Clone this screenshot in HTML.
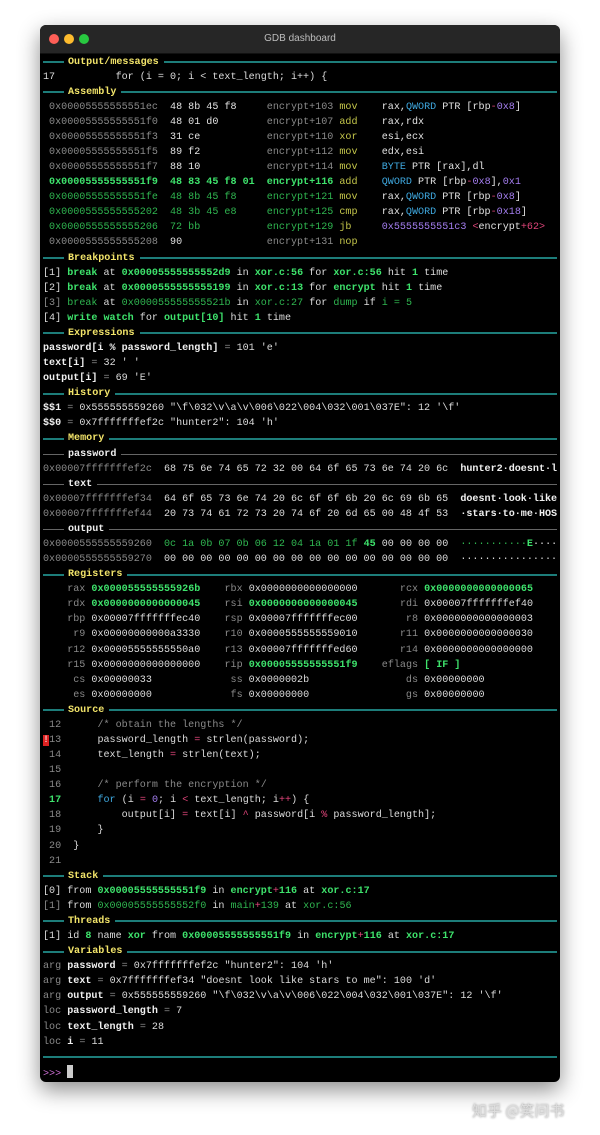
<!DOCTYPE html>
<html><head><meta charset="utf-8"><style>
html,body{margin:0;padding:0;background:#fff;width:600px;height:1135px;overflow:hidden;position:relative}
.win{position:absolute;left:40px;top:25px;width:520px;height:1057px;background:#000;border-radius:6px;box-shadow:0 8px 22px rgba(0,0,0,.45);overflow:hidden}
.tb{position:absolute;left:0;top:0;width:520px;height:28px;background:#262626;border-bottom:1px solid #111}
.dot{position:absolute;top:9px;width:10px;height:10px;border-radius:50%}
.tt{position:absolute;left:0;right:0;top:8px;text-align:center;font:10px "Liberation Sans",sans-serif;color:#bdbdbd}
.t{position:absolute;left:43px;top:54.5px;width:514px;font-family:"Liberation Mono",monospace;font-size:10.08px;line-height:15.09px;color:#dcdcdc}
.t>div{height:15.09px;white-space:pre;overflow:hidden}
.h{display:flex;align-items:center}
.h i{display:block;width:21px;height:2px;background:#1d7d7a;margin-right:4px}
.h span{color:#f2e46a;font-weight:bold}
.h u{display:block;flex:1;height:2px;background:#1d7d7a;margin-left:5px}
.s{display:flex;align-items:center}
.s i{display:block;width:21px;height:1px;background:#666;margin-right:4px}
.s span{color:#eee;font-weight:bold}
.s u{display:block;flex:1;height:1px;background:#666;margin-left:5px}
.g{color:#8a8a8a}.w{color:#e2e2e2}.G{color:#3ee36c;font-weight:bold}.d{color:#2fb650}
.m{color:#c4c64a}.c{color:#3fa9e0}.p{color:#a47ef0}.r{color:#e0457a}.b{color:#f0f0f0;font-weight:bold}
.gb{color:#3ee36c;font-weight:bold}
.bang{background:#d22;color:#fff}
.wm{position:absolute;left:472px;top:1100px;font:15px "Noto Sans CJK SC",sans-serif;color:#ddd;text-shadow:0 0 2px #888}
.cur{display:inline-block;width:6px;height:13px;background:#ccc;vertical-align:-2px}
</style></head><body>
<div class="win">
<div class="tb"><div class="dot" style="left:9px;background:#fe5f57"></div><div class="dot" style="left:24px;background:#febc2e"></div><div class="dot" style="left:39px;background:#28c840"></div><div class="tt">GDB dashboard</div></div>
</div>
<div class="t">
<div class="h"><i></i><span>Output/messages</span><u></u></div>
<div>17          for (i = 0; i &lt; text_length; i++) {</div>
<div class="h"><i></i><span>Assembly</span><u></u></div>
<div class="g"> 0x00005555555551ec  <span class="w">48 8b 45 f8</span>     encrypt+103 <span class="m">mov</span>    <span class="w">rax,<span class="c">QWORD</span> PTR [rbp<span class="r">-</span><span class="p">0x8</span>]</span></div>
<div class="g"> 0x00005555555551f0  <span class="w">48 01 d0</span>        encrypt+107 <span class="m">add</span>    <span class="w">rax,rdx</span></div>
<div class="g"> 0x00005555555551f3  <span class="w">31 ce</span>           encrypt+110 <span class="m">xor</span>    <span class="w">esi,ecx</span></div>
<div class="g"> 0x00005555555551f5  <span class="w">89 f2</span>           encrypt+112 <span class="m">mov</span>    <span class="w">edx,esi</span></div>
<div class="g"> 0x00005555555551f7  <span class="w">88 10</span>           encrypt+114 <span class="m">mov</span>    <span class="c">BYTE</span><span class="w"> PTR [rax],dl</span></div>
<div class="G"> 0x00005555555551f9  48 83 45 f8 01  encrypt+116 <span class="m" style="font-weight:normal">add</span>    <span class="c" style="font-weight:normal">QWORD</span><span class="w" style="font-weight:normal"> PTR [rbp<span class="r">-</span><span class="p">0x8</span>],<span class="p">0x1</span></span></div>
<div class="d"> 0x00005555555551fe  48 8b 45 f8     encrypt+121 <span class="m">mov</span>    <span class="w">rax,<span class="c">QWORD</span> PTR [rbp<span class="r">-</span><span class="p">0x8</span>]</span></div>
<div class="d"> 0x0000555555555202  48 3b 45 e8     encrypt+125 <span class="m">cmp</span>    <span class="w">rax,<span class="c">QWORD</span> PTR [rbp<span class="r">-</span><span class="p">0x18</span>]</span></div>
<div class="d"> 0x0000555555555206  72 bb           encrypt+129 <span class="m">jb</span>     <span class="p">0x5555555551c3 <span class="r">&lt;</span><span class="w">encrypt</span><span class="r">+62&gt;</span></span></div>
<div class="g"> 0x0000555555555208  <span class="w">90</span>              encrypt+131 <span class="m">nop</span></div>
<div class="h"><i></i><span>Breakpoints</span><u></u></div>
<div>[1] <span class="gb">break</span> at <span class="gb">0x00005555555552d9</span> in <span class="gb">xor.c:56</span> for <span class="gb">xor.c:56</span> hit <span class="gb">1</span> time</div>
<div>[2] <span class="gb">break</span> at <span class="gb">0x0000555555555199</span> in <span class="gb">xor.c:13</span> for <span class="gb">encrypt</span> hit <span class="gb">1</span> time</div>
<div><span class="g">[3]</span> <span class="d">break</span> at <span class="d">0x000055555555521b</span> in <span class="d">xor.c:27</span> for <span class="d">dump</span> if <span class="d">i = 5</span></div>
<div>[4] <span class="gb">write watch</span> for <span class="gb">output[10]</span> hit <span class="gb">1</span> time</div>
<div class="h"><i></i><span>Expressions</span><u></u></div>
<div><span class="b">password[i % password_length]</span> <span class="g">=</span> 101 'e'</div>
<div><span class="b">text[i]</span> <span class="g">=</span> 32 ' '</div>
<div><span class="b">output[i]</span> <span class="g">=</span> 69 'E'</div>
<div class="h"><i></i><span>History</span><u></u></div>
<div><span class="b">$$1</span> <span class="g">=</span> 0x555555559260 "\f\032\v\a\v\006\022\004\032\001\037E": 12 '\f'</div>
<div><span class="b">$$0</span> <span class="g">=</span> 0x7fffffffef2c "hunter2": 104 'h'</div>
<div class="h"><i></i><span>Memory</span><u></u></div>
<div class="s"><i></i><span>password</span><u></u></div>
<div><span class="g">0x00007fffffffef2c</span>  68 75 6e 74 65 72 32 00 64 6f 65 73 6e 74 20 6c  <span class="b">hunter2·doesnt·l</span></div>
<div class="s"><i></i><span>text</span><u></u></div>
<div><span class="g">0x00007fffffffef34</span>  64 6f 65 73 6e 74 20 6c 6f 6f 6b 20 6c 69 6b 65  <span class="b">doesnt·look·like</span></div>
<div><span class="g">0x00007fffffffef44</span>  20 73 74 61 72 73 20 74 6f 20 6d 65 00 48 4f 53  <span class="b">·stars·to·me·HOS</span></div>
<div class="s"><i></i><span>output</span><u></u></div>
<div><span class="g">0x0000555555559260</span>  <span class="d">0c 1a 0b 07 0b 06 12 04 1a 01 1f</span> <span class="gb">45</span> 00 00 00 00  <span class="d">···········</span><span class="gb">E</span><span class="w">····</span></div>
<div><span class="g">0x0000555555559270</span>  00 00 00 00 00 00 00 00 00 00 00 00 00 00 00 00  ················</div>
<div class="h"><i></i><span>Registers</span><u></u></div>
<div>    <span class="g">rax</span> <span class="gb">0x000055555555926b</span>    <span class="g">rbx</span> 0x0000000000000000       <span class="g">rcx</span> <span class="gb">0x0000000000000065</span></div>
<div>    <span class="g">rdx</span> <span class="gb">0x0000000000000045</span>    <span class="g">rsi</span> <span class="gb">0x0000000000000045</span>       <span class="g">rdi</span> 0x00007fffffffef40</div>
<div>    <span class="g">rbp</span> 0x00007fffffffec40    <span class="g">rsp</span> 0x00007fffffffec00        <span class="g">r8</span> 0x0000000000000003</div>
<div>     <span class="g">r9</span> 0x00000000000a3330    <span class="g">r10</span> 0x0000555555559010       <span class="g">r11</span> 0x0000000000000030</div>
<div>    <span class="g">r12</span> 0x00005555555550a0    <span class="g">r13</span> 0x00007fffffffed60       <span class="g">r14</span> 0x0000000000000000</div>
<div>    <span class="g">r15</span> 0x0000000000000000    <span class="g">rip</span> <span class="gb">0x00005555555551f9</span>    <span class="g">eflags</span> <span class="gb">[ IF ]</span></div>
<div>     <span class="g">cs</span> 0x00000033             <span class="g">ss</span> 0x0000002b                <span class="g">ds</span> 0x00000000</div>
<div>     <span class="g">es</span> 0x00000000             <span class="g">fs</span> 0x00000000                <span class="g">gs</span> 0x00000000</div>
<div class="h"><i></i><span>Source</span><u></u></div>
<div><span class="g"> 12</span>      <span class="g">/* obtain the lengths */</span></div>
<div><span class="bang">!</span><span class="g">13</span>      password_length <span class="r">=</span> strlen(password);</div>
<div><span class="g"> 14</span>      text_length <span class="r">=</span> strlen(text);</div>
<div><span class="g"> 15</span></div>
<div><span class="g"> 16</span>      <span class="g">/* perform the encryption */</span></div>
<div><span class="gb"> 17</span>      <span class="c">for</span> (i <span class="r">=</span> <span class="p">0</span>; i <span class="r">&lt;</span> text_length; i<span class="r">++</span>) {</div>
<div><span class="g"> 18</span>          output[i] <span class="r">=</span> text[i] <span class="r">^</span> password[i <span class="r">%</span> password_length];</div>
<div><span class="g"> 19</span>      }</div>
<div><span class="g"> 20</span>  }</div>
<div><span class="g"> 21</span></div>
<div class="h"><i></i><span>Stack</span><u></u></div>
<div>[0] from <span class="gb">0x00005555555551f9</span> in <span class="gb">encrypt</span><span class="r">+</span><span class="gb">116</span> at <span class="gb">xor.c:17</span></div>
<div><span class="g">[1]</span> from <span class="d">0x00005555555552f0</span> in <span class="d">main</span><span class="r">+</span><span class="d">139</span> at <span class="d">xor.c:56</span></div>
<div class="h"><i></i><span>Threads</span><u></u></div>
<div>[1] id <span class="gb">8</span> name <span class="gb">xor</span> from <span class="gb">0x00005555555551f9</span> in <span class="gb">encrypt</span><span class="r">+</span><span class="gb">116</span> at <span class="gb">xor.c:17</span></div>
<div class="h"><i></i><span>Variables</span><u></u></div>
<div><span class="g">arg</span> <span class="b">password</span> <span class="g">=</span> 0x7fffffffef2c "hunter2": 104 'h'</div>
<div><span class="g">arg</span> <span class="b">text</span> <span class="g">=</span> 0x7fffffffef34 "doesnt look like stars to me": 100 'd'</div>
<div><span class="g">arg</span> <span class="b">output</span> <span class="g">=</span> 0x555555559260 "\f\032\v\a\v\006\022\004\032\001\037E": 12 '\f'</div>
<div><span class="g">loc</span> <span class="b">password_length</span> <span class="g">=</span> 7</div>
<div><span class="g">loc</span> <span class="b">text_length</span> <span class="g">=</span> 28</div>
<div><span class="g">loc</span> <span class="b">i</span> <span class="g">=</span> 11</div>
<div class="h"><u style="margin-left:0"></u></div>
<div><span style="color:#d070d8">&gt;&gt;&gt;</span> <span class="cur"></span></div>
</div>
<div class="wm">知乎 @笑问书</div>
</body></html>
